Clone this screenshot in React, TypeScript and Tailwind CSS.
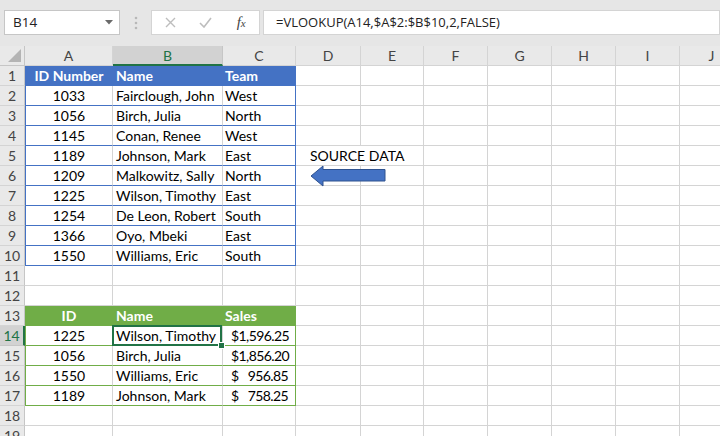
import React from "react";

const COLS = ["A", "B", "C", "D", "E", "F", "G", "H", "I", "J"];

type Row = { a?: string; b?: string; c?: string; sales?: [string, string] };

const blueRows: Row[] = [
  { a: "1033", b: "Fairclough, John", c: "West" },
  { a: "1056", b: "Birch, Julia", c: "North" },
  { a: "1145", b: "Conan, Renee", c: "West" },
  { a: "1189", b: "Johnson, Mark", c: "East" },
  { a: "1209", b: "Malkowitz, Sally", c: "North" },
  { a: "1225", b: "Wilson, Timothy", c: "East" },
  { a: "1254", b: "De Leon, Robert", c: "South" },
  { a: "1366", b: "Oyo, Mbeki", c: "East" },
  { a: "1550", b: "Williams, Eric", c: "South" },
];

const greenRows: Row[] = [
  { a: "1225", b: "Wilson, Timothy", sales: ["$", "1,596.25"] },
  { a: "1056", b: "Birch, Julia", sales: ["$", "1,856.20"] },
  { a: "1550", b: "Williams, Eric", sales: ["$", "956.85"] },
  { a: "1189", b: "Johnson, Mark", sales: ["$", "758.25"] },
];

const GRID =
  "grid grid-cols-[25px_88px_110px_73px_65px_63px_64px_64px_64px_64px_64px] w-[744px]";

function RowHeader({ n }: { n: number }) {
  const sel = n === 14;
  return (
    <div
      className={
        sel
          ? "h-[20px] flex items-center justify-center bg-[#d2d2d2] text-[#217346] border-b border-b-[#c6c6c6] border-r-2 border-r-[#217346]"
          : "h-[20px] flex items-center justify-center bg-[#e9e9e9] text-[#444] border-b border-b-[#d4d4d4] border-r border-r-[#c6c6c6]"
      }
    >
      {n}
    </div>
  );
}

const plain =
  "h-[20px] border-r border-b border-[#d4d4d4] flex items-center whitespace-nowrap";

function SheetRow({ n }: { n: number }) {
  const cells: React.ReactNode[] = [];
  if (n === 1) {
    cells.push(
      <div key="a" className="h-[20px] bg-[#4472c4] text-white font-bold flex items-center justify-center border-b border-[#4472c4]">
        ID Number
      </div>,
      <div key="b" className="h-[20px] bg-[#4472c4] text-white font-bold flex items-center pl-[3px] border-b border-[#4472c4]">
        Name
      </div>,
      <div key="c" className="h-[20px] bg-[#4472c4] text-white font-bold flex items-center pl-[2px] border-b border-r border-[#4472c4]">
        Team
      </div>
    );
  } else if (n >= 2 && n <= 10) {
    const r = blueRows[n - 2];
    cells.push(
      <div key="a" className="h-[20px] flex items-center justify-center border-l border-l-[#4472c4] border-b border-b-[#4472c4] border-r border-r-[#d4d4d4]">
        {r.a}
      </div>,
      <div key="b" className="h-[20px] flex items-center pl-[3px] whitespace-nowrap border-b border-b-[#4472c4] border-r border-r-[#d4d4d4]">
        {r.b}
      </div>,
      <div key="c" className="h-[20px] flex items-center pl-[2px] border-b border-b-[#4472c4] border-r border-r-[#4472c4]">
        {r.c}
      </div>
    );
  } else if (n === 13) {
    cells.push(
      <div key="a" className="h-[20px] bg-[#70ad47] text-white font-bold flex items-center justify-center border-b border-[#70ad47]">
        ID
      </div>,
      <div key="b" className="h-[20px] bg-[#70ad47] text-white font-bold flex items-center pl-[3px] border-b border-[#70ad47]">
        Name
      </div>,
      <div key="c" className="h-[20px] bg-[#70ad47] text-white font-bold flex items-center pl-[2px] border-b border-r border-[#70ad47]">
        Sales
      </div>
    );
  } else if (n >= 14 && n <= 17) {
    const r = greenRows[n - 14];
    const selected = n === 14;
    cells.push(
      <div key="a" className="h-[20px] flex items-center justify-center border-l border-l-[#70ad47] border-b border-b-[#70ad47] border-r border-r-[#d4d4d4]">
        {r.a}
      </div>,
      <div key="b" className={selected ? "relative z-10 h-[20px] flex items-center pl-[3px] whitespace-nowrap border-b border-b-[#70ad47] border-r border-r-[#d4d4d4]" : "h-[20px] flex items-center pl-[3px] whitespace-nowrap border-b border-b-[#70ad47] border-r border-r-[#d4d4d4]"}>
        {r.b}
        {selected && (
          <>
            <div className="absolute -left-[1px] -top-[1px] right-0 -bottom-[1px] border-2 border-[#217346] pointer-events-none" />
            <div className="absolute -right-[3px] -bottom-[4px] w-[7px] h-[7px] bg-[#217346] border border-white" />
          </>
        )}
      </div>,
      <div key="c" className="h-[20px] flex items-center justify-between pl-[8px] pr-[7px] tracking-[-0.6px] border-b border-b-[#70ad47] border-r border-r-[#70ad47]">
        <span>{r.sales![0]}</span>
        <span>{r.sales![1]}</span>
      </div>
    );
  } else {
    cells.push(
      <div key="a" className={plain} />,
      <div key="b" className={plain} />,
      <div key="c" className={plain} />
    );
  }

  if (n === 5) {
    cells.push(
      <div key="de" className="col-span-2 h-[20px] border-r border-b border-[#d4d4d4] flex items-center pl-[14px] whitespace-nowrap">
        SOURCE DATA
      </div>
    );
    for (let i = 5; i < 10; i++) cells.push(<div key={i} className={plain} />);
  } else {
    for (let i = 3; i < 10; i++) cells.push(<div key={i} className={plain} />);
  }

  return (
    <>
      <RowHeader n={n} />
      {cells}
    </>
  );
}

function Toolbar() {
  return (
    <div className="h-[46px] bg-[#e6e6e6] flex items-start pt-[10px] font-['Open_Sans',sans-serif] text-[13px] text-[#222]">
      <div className="ml-[4px] w-[116px] h-[25px] bg-white border border-[#c6c6c6] flex items-center justify-between pl-[8px] pr-[6px]">
        <span className="text-[13.5px]">B14</span>
        <svg width="8" height="5" viewBox="0 0 8 5">
          <path d="M0 0 L8 0 L4 4.5 Z" fill="#6a6a6a" />
        </svg>
      </div>
      <div className="w-[31px] h-[25px] flex items-center justify-center">
        <svg width="4" height="14" viewBox="0 0 4 14">
          <circle cx="2" cy="2" r="1.3" fill="#b8b8b8" />
          <circle cx="2" cy="7" r="1.3" fill="#b8b8b8" />
          <circle cx="2" cy="12" r="1.3" fill="#b8b8b8" />
        </svg>
      </div>
      <div className="w-[109px] h-[25px] bg-white border border-[#d4d4d4] flex items-center">
        <div className="w-[36px] flex justify-center pl-[2px]">
          <svg width="11" height="11" viewBox="0 0 11 11">
            <path d="M1 1 L10 10 M10 1 L1 10" stroke="#bdbdbd" strokeWidth="1.4" />
          </svg>
        </div>
        <div className="w-[36px] flex justify-center">
          <svg width="13" height="11" viewBox="0 0 13 11">
            <path d="M1 6 L5 10 L12 1" stroke="#bdbdbd" strokeWidth="1.6" fill="none" />
          </svg>
        </div>
        <div className="w-[36px] flex justify-center font-['Liberation_Serif',serif] italic text-[#444] text-[15px] leading-none">
          <span>f</span>
          <span className="text-[11px] mt-[3px]">x</span>
        </div>
      </div>
      <div className="ml-[3px] flex-1 h-[25px] bg-white border border-[#d4d4d4] flex items-center pl-[12px] whitespace-nowrap">
        =VLOOKUP(A14,$A$2:$B$10,2,FALSE)
      </div>
    </div>
  );
}

export default function App() {
  const rows = Array.from({ length: 19 }, (_, i) => i + 1);
  return (
    <div className="relative w-[720px] h-[436px] overflow-hidden bg-white">
      <Toolbar />
      <div className={`${GRID} font-['Lato',sans-serif] text-[14px] text-black`}>
        <div className="h-[20px] bg-[#e9e9e9] border-r border-b border-[#c6c6c6] relative overflow-hidden">
          <svg className="absolute right-[3px] bottom-[3px]" width="13" height="13" viewBox="0 0 13 13">
            <path d="M13 0 L13 13 L0 13 Z" fill="#b4b4b4" />
          </svg>
        </div>
        {COLS.map((c) => (
          <div
            key={c}
            className={
              c === "B"
                ? "h-[20px] flex items-center justify-center bg-[#d2d2d2] text-[#217346] border-r border-r-[#c6c6c6] border-b-2 border-b-[#217346]"
                : "h-[20px] flex items-center justify-center bg-[#e9e9e9] text-[#444] border-r border-r-[#d4d4d4] border-b border-b-[#d4d4d4]"
            }
          >
            {c}
          </div>
        ))}
        {rows.map((n) => (
          <SheetRow key={n} n={n} />
        ))}
      </div>
      <svg className="absolute left-[309px] top-[164px]" width="80" height="25" viewBox="309 164 80 25">
        <path
          d="M311 176 L323 166 L323 169.5 L385 169.5 L385 181 L323 181 L323 186 Z"
          fill="#4472c4"
          stroke="#2f528f"
          strokeWidth="1"
        />
      </svg>
    </div>
  );
}
